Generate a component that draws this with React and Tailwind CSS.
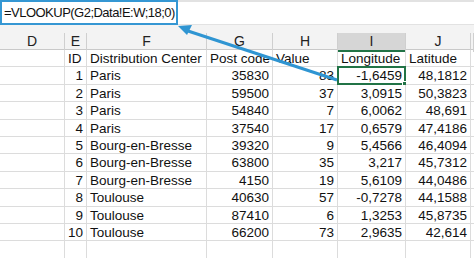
const cols = ['D', 'E', 'F', 'G', 'H', 'I', 'J', '']

const rows = [
  [1, 'Paris', '35830', '83', '-1,6459', '48,1812'],
  [2, 'Paris', '59500', '37', '3,0915', '50,3823'],
  [3, 'Paris', '54840', '7', '6,0062', '48,691'],
  [4, 'Paris', '37540', '17', '0,6579', '47,4186'],
  [5, 'Bourg-en-Bresse', '39320', '9', '5,4566', '46,4094'],
  [6, 'Bourg-en-Bresse', '63800', '35', '3,217', '45,7312'],
  [7, 'Bourg-en-Bresse', '4150', '19', '5,6109', '44,0486'],
  [8, 'Toulouse', '40630', '57', '-0,7278', '44,1588'],
  [9, 'Toulouse', '87410', '6', '1,3253', '45,8735'],
  [10, 'Toulouse', '66200', '73', '2,9635', '42,614'],
]

const gridCols = 'grid grid-cols-[65px_22px_120px_66px_65px_68px_65px_1fr]'
const cell = 'border-r border-b border-[#dcdcdc] h-[17.4px] leading-[17px] whitespace-nowrap overflow-visible'

function Cell({ children, right, selected }) {
  return (
    <div className={`${cell} relative ${right ? 'text-right pr-[3px]' : 'pl-[3px]'}`}>
      {children}
      {selected && (
        <div className="absolute -left-px -top-px right-[-1px] bottom-[-1px] border-2 border-[#217346]">
          <div className="absolute -right-[3px] -bottom-[3px] w-[5px] h-[5px] bg-[#217346] border border-white" />
        </div>
      )}
    </div>
  )
}

export default function App() {
  return (
    <div
      className="relative w-[474px] h-[258px] overflow-hidden bg-white text-[#111] text-[13.5px]"
      style={{ fontFamily: '"Liberation Sans", Arial, sans-serif' }}
    >
      {/* formula bar */}
      <div className="flex h-[25px] border-t-2 border-b border-[#e2e2e2] bg-white">
        <div className="w-[178px] h-[25px] -mt-[2px] border-2 border-[#3597d3] pl-[2px] text-[13px] tracking-[-0.04em] leading-[21px]">
          =VLOOKUP(G2;Data!E:W;18;0)
        </div>
        <div className="flex-1" />
      </div>
      <div className="h-[8px] bg-[#f3f3f3]" />

      {/* column letters */}
      <div className={`${gridCols} h-[17px] bg-[#f3f3f3] text-[#222] text-[14px] border-b border-[#c9c9c9]`}>
        {cols.map((c) => (
          <div
            key={c || 'x'}
            className={`border-r border-[#cfcfcf] text-center leading-[17px] ${c === 'I' ? 'bg-[#d6d6d6] border-b-2 border-b-[#217346]' : ''}`}
          >
            {c}
          </div>
        ))}
      </div>

      {/* table */}
      <div className={gridCols}>
        <Cell />
        <Cell>ID</Cell>
        <Cell>Distribution Center</Cell>
        <Cell>Post code</Cell>
        <Cell>Value</Cell>
        <Cell>Longitude</Cell>
        <Cell>Latitude</Cell>
        <Cell />
        {rows.map((r, i) => (
          <div key={r[0]} className="contents">
            <Cell />
            <Cell right>{r[0]}</Cell>
            <Cell>{r[1]}</Cell>
            <Cell right>{r[2]}</Cell>
            <Cell right>{r[3]}</Cell>
            <Cell right selected={i === 0}>{r[4]}</Cell>
            <Cell right>{r[5]}</Cell>
            <Cell />
          </div>
        ))}
        {cols.map((c) => (
          <Cell key={'e' + c} />
        ))}
      </div>

      {/* arrow pointing from the selected cell to the formula */}
      <svg className="absolute left-0 top-0 pointer-events-none" width="474" height="258">
        <line x1="337" y1="80" x2="188" y2="31" stroke="#2f95d2" strokeWidth="3" />
        <polygon points="178,26 192,25 187,35" fill="#2f95d2" />
      </svg>
    </div>
  )
}
